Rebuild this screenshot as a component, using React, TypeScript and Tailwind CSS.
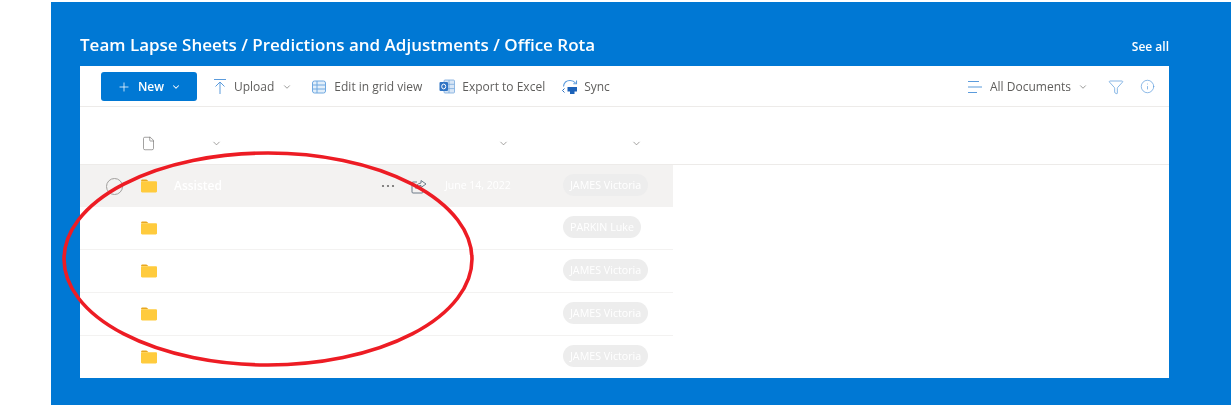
import React from 'react';
import { ChevronDown, File, Filter, Info, Plus } from 'lucide-react';

const rows = [
  { name: 'Assisted', date: 'June 14, 2022', person: 'JAMES Victoria', active: true },
  { name: '', date: '', person: 'PARKIN Luke', active: false },
  { name: '', date: '', person: 'JAMES Victoria', active: false },
  { name: '', date: '', person: 'JAMES Victoria', active: false },
  { name: '', date: '', person: 'JAMES Victoria', active: false },
];

function FolderIcon() {
  return (
    <svg width="18" height="14" viewBox="0 0 18 14" className="shrink-0">
      <path d="M1 2.2C1 1.2 1.6.6 2.500.6h3.600c.6 0 1 .2 1.400.6l1 1H1z" fill="#e9a820" />
      <path d="M1 3.400c0-.7.5-1.200 1.200-1.200h13.600c.7 0 1.200.5 1.200 1.200v8.800c0 .7-.5 1.200-1.200 1.200H2.200c-.7 0-1.200-.5-1.200-1.200z" fill="#ffcb3d" />
    </svg>
  );
}

function UploadIcon() {
  return (
    <svg width="14" height="17" viewBox="0 0 14 17" fill="none" stroke="#5b9bdc" strokeWidth="1">
      <path d="M1 1.500h12M7 16V4M2.500 8.500 7 4l4.500 4.500" />
    </svg>
  );
}

function GridIcon() {
  return (
    <svg width="14" height="14" viewBox="0 0 14 14" fill="none" stroke="#6fa8e0" strokeWidth="1">
      <rect x="0.500" y="1" width="13" height="12" rx="2" fill="#e3effa" />
      <path d="M0.500 5h13M0.500 9h13M5 1v12" />
    </svg>
  );
}

function ExcelIcon() {
  return (
    <svg width="16" height="15" viewBox="0 0 16 15">
      <rect x="5" y="1" width="10.500" height="13" rx="1" fill="#d8e6f6" stroke="#7aa9dd" strokeWidth="0.800" />
      <path d="M10 1v13M5 5.300h10.500M5 9.600h10.500" stroke="#7aa9dd" strokeWidth="0.800" />
      <rect x="0.500" y="3" width="8.500" height="9" rx="1" fill="#2f74c4" />
      <ellipse cx="4.700" cy="7.500" rx="2" ry="2.400" fill="none" stroke="#ffffff" strokeWidth="1" />
    </svg>
  );
}

function SyncIcon() {
  return (
    <svg width="16" height="16" viewBox="0 0 16 16" fill="none">
      <path d="M1.500 7.500C2 3.500 5 1.500 8 1.500c2.500 0 4.300 1 5.500 2.500" stroke="#5b9bdc" strokeWidth="1.100" />
      <path d="M14.500 1.500v3.200h-3.200" stroke="#5b9bdc" strokeWidth="1.100" />
      <path d="M0.500 11.500 2.500 13.500M0.500 11.500 2.500 9.500" stroke="#2b6fc0" strokeWidth="1" />
      <path d="M5.500 8h9.500v4.500h-2.500v2.500h-4.500v-2.500h-2.500z" fill="#1c62b9" />
    </svg>
  );
}

function ViewIcon() {
  return (
    <svg width="16" height="14" viewBox="0 0 16 14" fill="none" stroke="#5b9bdc" strokeWidth="1.100">
      <path d="M1 1.500h11M1 7h14M1 12.500h9" />
    </svg>
  );
}

function ShareIcon() {
  return (
    <svg width="16" height="15" viewBox="0 0 16 15" fill="none" stroke="#6d7a88" strokeWidth="1">
      <path d="M6 3H2a1 1 0 0 0-1 1v9a1 1 0 0 0 1 1h9a1 1 0 0 0 1-1v-3" />
      <path d="M10 1.500 15 5l-5 3.500V6.500c-2.500 0-4 1-5 3 0-3 1.500-5 5-5.500z" fill="#f3f2f1" />
    </svg>
  );
}

function MoreDots() {
  return (
    <svg width="14" height="4" viewBox="0 0 14 4" fill="#6b6a69">
      <circle cx="2" cy="2" r="1.100" />
      <circle cx="7" cy="2" r="1.100" />
      <circle cx="12" cy="2" r="1.100" />
    </svg>
  );
}

function ColumnChevron() {
  return <ChevronDown size={11} strokeWidth={1.5} className="text-[#7a7876]" />;
}

export default function App() {
  return (
    <div className="relative h-[405px] w-[1231px] overflow-hidden bg-white pt-[2px] pl-[51px] font-['Open_Sans','Noto_Sans',sans-serif] blur-[0.4px]">
      <div className="flex h-[403px] flex-col bg-[#0078d4] pr-[62px] pl-[29px]">
        {/* title strip */}
        <div className="flex h-[64px] items-end justify-between pb-[9px] text-white">
          <h1 className="text-[17px] leading-[24px] font-semibold">
            Team Lapse Sheets / Predictions and Adjustments / Office Rota
          </h1>
          <a className="pb-[2px] text-[12px] leading-[16px] font-semibold">See all</a>
        </div>

        <div className="flex h-[312px] flex-col bg-white">
          {/* toolbar */}
          <div className="flex h-[41px] shrink-0 items-center border-b border-[#edebe9] pt-[1px] pr-[14px] pl-[21px] text-[12px] text-[#5f5e5c]">
            <button className="flex h-[29px] w-[96px] items-center justify-center gap-[7px] rounded-[3px] bg-[#0078d4] font-semibold text-white">
              <Plus size={14} strokeWidth={1.300} />
              <span>New</span>
              <ChevronDown size={10} strokeWidth={2.500} />
            </button>
            <div className="ml-[16px] flex items-center gap-[7px]">
              <UploadIcon />
              <span>Upload</span>
              <ChevronDown size={10} strokeWidth={1.500} className="ml-[1px]" />
            </div>
            <div className="ml-[20px] flex items-center gap-[8px]">
              <GridIcon />
              <span>Edit in grid view</span>
            </div>
            <div className="ml-[17px] flex items-center gap-[7px]">
              <ExcelIcon />
              <span>Export to Excel</span>
            </div>
            <div className="ml-[17px] flex items-center gap-[6px]">
              <SyncIcon />
              <span>Sync</span>
            </div>
            <div className="ml-auto flex items-center gap-[7px]">
              <ViewIcon />
              <span>All Documents</span>
              <ChevronDown size={10} strokeWidth={1.500} />
            </div>
            <Filter size={16} strokeWidth={1.100} className="ml-[20px] text-[#5b9bdc]" />
            <Info size={15} strokeWidth={1.100} className="ml-[16px] text-[#5b9bdc]" />
          </div>

          {/* column headers */}
          <div className="flex h-[58px] shrink-0 items-center border-b border-[#edebe9] pt-[16px]">
            <File size={15} strokeWidth={1} className="ml-[61px] text-[#6b6a69]" />
            <div className="ml-[55px]"><ColumnChevron /></div>
            <div className="ml-[276px]"><ColumnChevron /></div>
            <div className="ml-[122px]"><ColumnChevron /></div>
          </div>

          {/* rows */}
          <div className="flex w-[593px] flex-1 flex-col">
            {rows.map((row, index) => (
              <div
                key={index}
                className={`flex flex-1 items-center ${row.active ? 'bg-[#f3f2f1]' : ''} ${index > 0 && index < 4 ? 'border-b border-[#f3f2f1]' : ''}`}
              >
                <div className="flex w-[60px] shrink-0 justify-end">
                  <div className="mr-[17px] flex h-[17px] w-[17px] items-center justify-center">
                    {row.active && <span className="h-[17px] w-[17px] rounded-full border border-[#a19f9d]" />}
                  </div>
                </div>
                <FolderIcon />
                <div className="ml-[16px] w-[207px] shrink-0 text-[12px] font-semibold text-white">{row.name}</div>
                <div className="flex w-[30px] shrink-0 items-center">{row.active && <MoreDots />}</div>
                <div className="flex w-[34px] shrink-0 items-center">{row.active && <ShareIcon />}</div>
                <div className="w-[118px] shrink-0 text-[10.500px] text-white">{row.date}</div>
                <span className="mb-[3px] rounded-full bg-[#ededed] px-[7px] py-[3px] text-[10.700px] leading-[16px] whitespace-nowrap text-white">
                  {row.person}
                </span>
              </div>
            ))}
          </div>
        </div>
      </div>

      {/* red annotation drawn over the screenshot */}
      <svg className="pointer-events-none absolute inset-0" width="1231" height="405" viewBox="0 0 1231 405" fill="none">
        <ellipse cx="268" cy="259" rx="204" ry="106" stroke="#ed1c24" strokeWidth="3.600" />
      </svg>
    </div>
  );
}
